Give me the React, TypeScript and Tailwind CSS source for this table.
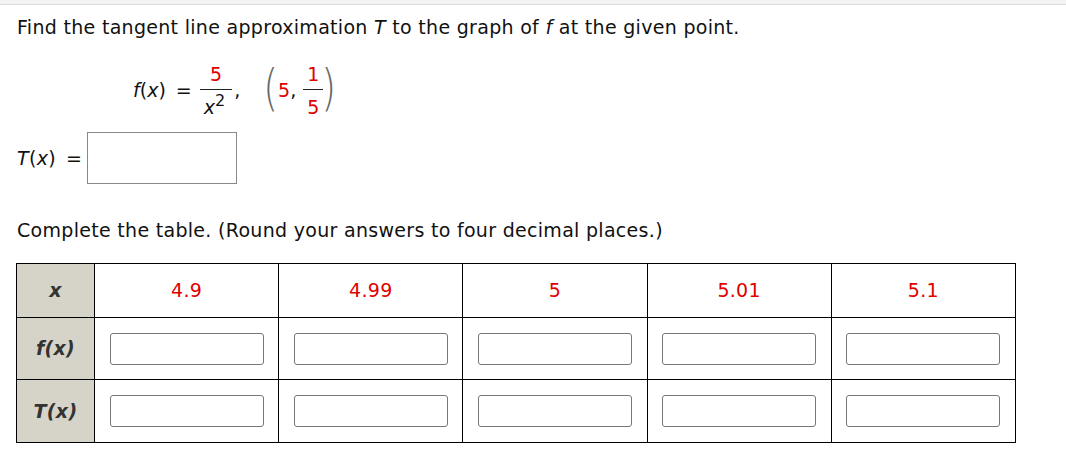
import React from 'react';

const font = { fontFamily: 'Verdana, "DejaVu Sans", sans-serif' };

function Frac({
  top,
  bottom,
  className = '',
}: {
  top: React.ReactNode;
  bottom: React.ReactNode;
  className?: string;
}) {
  return (
    <span className={`inline-flex flex-col items-center align-middle ${className}`}>
      <span className="px-[4px] pb-[5px] leading-[20px]">{top}</span>
      <span className="w-full border-t border-[#222]" />
      <span className="px-[4px] pt-[7px] leading-[20px]">{bottom}</span>
    </span>
  );
}

function Paren({ children, className = '' }: { children: React.ReactNode; className?: string }) {
  return (
    <span
      className={`inline-block -translate-y-[3px] scale-y-[1.3] text-[38px] font-light leading-none text-[#6a6a6a] ${className}`}
    >
      {children}
    </span>
  );
}

const xs = ['4.9', '4.99', '5', '5.01', '5.1'];

function InputCell() {
  return (
    <td className="border border-black px-[14px] align-middle">
      <div className="mx-auto h-[32px] w-[154px] rounded-[3px] border border-[#777] bg-white" />
    </td>
  );
}

export default function App() {
  return (
    <div className="min-h-[470px] w-[1066px] bg-white text-[19px] tracking-[0.3px] text-[#111]" style={font}>
      <div className="h-[5px] border-b border-[#dcdcdc] bg-[#f3f3f3]" />
      <div className="pl-[17px]">
        <p className="mt-[11px] leading-[22px]">
          Find the tangent line approximation <i>T</i> to the graph of <i>f</i> at the given point.
        </p>

        <div className="mt-[26px] ml-[116px] flex items-center tracking-normal">
          <span>
            <i>f</i>(<i>x</i>)
          </span>
          <span className="ml-[10px] mr-[8px]">=</span>
          <Frac
            className="mr-[2px]"
            top={<span className="text-[#e00000]">5</span>}
            bottom={
              <span className="pr-[3px]">
                <i>x</i>
                <sup className="text-[16px]">2</sup>
              </span>
            }
          />
          <span>,</span>
          <Paren className="ml-[23px]">(</Paren>
          <span className="text-[#e00000]">5</span>
          <span className="mr-[7px]">,</span>
          <Frac top={<span className="text-[#e00000]">1</span>} bottom={<span className="text-[#e00000]">5</span>} />
          <Paren className="-ml-[2px]">)</Paren>
        </div>

        <div className="mt-[15px] flex items-center">
          <span>
            <i>T</i>(<i>x</i>)
          </span>
          <span className="ml-[10px] mr-[5px]">=</span>
          <div className="h-[52px] w-[150px] border border-[#888] bg-white" />
        </div>

        <p className="mt-[35px] leading-[22px]">Complete the table. (Round your answers to four decimal places.)</p>
      </div>

      <table className="ml-[16px] mt-[22px] w-[1000px] table-fixed border-collapse border border-black">
        <colgroup>
          <col className="w-[78px]" />
          <col />
          <col />
          <col />
          <col />
          <col />
        </colgroup>
        <tbody>
          <tr className="h-[54px]">
            <td className="border border-black bg-[#d6d3c9] text-center font-bold italic text-[#333]">x</td>
            {xs.map((v) => (
              <td key={v} className="border border-black text-center text-[#e00000]">
                {v}
              </td>
            ))}
          </tr>
          <tr className="h-[62px]">
            <td className="border border-black bg-[#d6d3c9] text-center font-bold italic text-[#333]">f(x)</td>
            {xs.map((v) => (
              <InputCell key={v} />
            ))}
          </tr>
          <tr className="h-[63px]">
            <td className="border border-black bg-[#d6d3c9] text-center font-bold italic text-[#333]">T(x)</td>
            {xs.map((v) => (
              <InputCell key={v} />
            ))}
          </tr>
        </tbody>
      </table>
    </div>
  );
}
